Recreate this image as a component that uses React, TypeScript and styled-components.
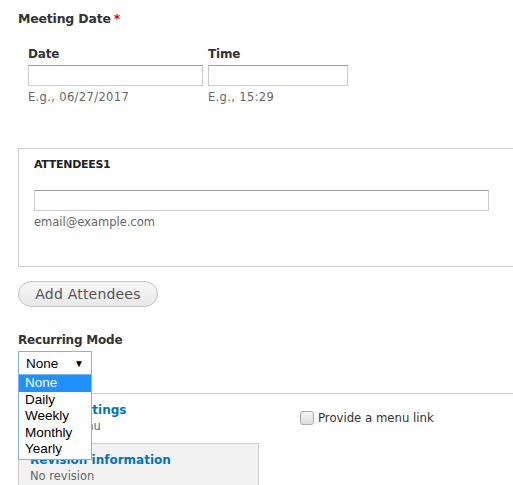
import { createGlobalStyle } from "styled-components";
import styled from "styled-components";

const Global = createGlobalStyle`
  html, body { margin: 0; padding: 0; background: #fff; }
  body {
    font-family: "DejaVu Sans", "Lucida Grande", sans-serif;
    color: #333;
    overflow: hidden;
  }
`;

const Page = styled.div`
  padding: 10px 0 0 18px;
  width: 560px;
`;

const Label = styled.div<{ small?: boolean }>`
  font-weight: bold;
  font-size: ${(p) => (p.small ? "12px" : "12.5px")};
  line-height: 18px;
  color: #333;
  letter-spacing: -0.2px;
`;

const Required = styled.span`
  color: #e00;
  margin-left: 3px;
`;

const DateRow = styled.div`
  display: flex;
  gap: 5px;
  margin: 17px 0 0 10px;
`;

const Field = styled.div`
  display: flex;
  flex-direction: column;
`;

const TextInput = styled.div<{ w: number; gap?: number }>`
  width: ${(p) => p.w}px;
  height: 21px;
  box-sizing: border-box;
  border: 1px solid #ccc;
  border-top-color: #999;
  margin-top: ${(p) => p.gap ?? 2}px;
`;

const Desc = styled.div<{ wide?: boolean }>`
  font-size: 11.5px;
  letter-spacing: ${(p) => (p.wide ? "0.35px" : "0")};
  color: #666;
  line-height: 16px;
  margin-top: 3px;
`;

const Fieldset = styled.div`
  margin-top: 43px;
  border: 1px solid #ccc;
  border-right: none;
  height: 119px;
  box-sizing: border-box;
  padding: 8px 0 0 15px;
`;

const Caps = styled.div`
  font-weight: bold;
  font-size: 11px;
  line-height: 16px;
  letter-spacing: -0.3px;
  text-transform: uppercase;
  color: #222;
`;

const Button = styled.div`
  margin-top: 14px;
  width: 140px;
  height: 26px;
  box-sizing: border-box;
  border: 1px solid #c4c4c4;
  border-radius: 13px;
  background: linear-gradient(#f6f6f6, #e8e8e8);
  color: #555;
  font-size: 14px;
  letter-spacing: 0.2px;
  display: flex;
  align-items: center;
  justify-content: center;
`;

const RecurringBlock = styled.div`
  margin-top: 24px;
  position: relative;
`;

const Select = styled.div`
  margin-top: 2px;
  width: 74px;
  height: 23px;
  box-sizing: border-box;
  border: 1px solid #7eb4ea;
  border-bottom: none;
  display: flex;
  align-items: center;
  justify-content: space-between;
  padding: 0 7px 0 7px;
  font-family: "Liberation Sans", Arial, sans-serif;
  font-size: 13.5px;
  color: #000;
`;

const Arrow = styled.span`
  font-size: 10px;
`;

const ListBox = styled.div`
  position: absolute;
  left: 0;
  top: 43px;
  width: 74px;
  box-sizing: border-box;
  border: 1px solid #7eb4ea;
  background: #fff;
  z-index: 2;
  font-family: "Liberation Sans", Arial, sans-serif;
  font-size: 13.5px;
  padding-bottom: 1px;
`;

const Option = styled.div<{ active?: boolean }>`
  height: 16.5px;
  line-height: 16.5px;
  padding-left: 6px;
  background: ${(p) => (p.active ? "#1e90ff" : "transparent")};
  color: ${(p) => (p.active ? "#fff" : "#000")};
`;

const VerticalTabs = styled.div`
  margin-top: 19px;
  border-top: 1px solid #ccc;
  border-left: 1px solid #ccc;
  display: flex;
  height: 100px;
`;

const TabList = styled.div`
  width: 240px;
  display: flex;
  flex-direction: column;
`;

const Tab = styled.div<{ selected?: boolean }>`
  box-sizing: border-box;
  height: ${(p) => (p.selected ? "49px" : "auto")};
  flex: ${(p) => (p.selected ? "none" : "1")};
  padding: 8px 0 0 11px;
  background: ${(p) => (p.selected ? "#fff" : "#f2f2f2")};
  border-top: ${(p) => (p.selected ? "none" : "1px solid #ccc")};
  border-right: ${(p) => (p.selected ? "none" : "1px solid #ccc")};
`;

const TabTitle = styled.div`
  color: #0074bd;
  font-weight: bold;
  font-size: 12px;
  line-height: 16px;
`;

const TabSummary = styled.div`
  color: #666;
  font-size: 11.5px;
  line-height: 16px;
`;

const Pane = styled.div`
  flex: 1;
  padding: 17px 0 0 41px;
`;

const CheckRow = styled.div`
  display: flex;
  align-items: center;
  gap: 4px;
  font-size: 11.7px;
  color: #333;
`;

const Checkbox = styled.span`
  width: 12px;
  height: 12px;
  border: 1px solid #aaa;
  border-radius: 3px;
  background: linear-gradient(#f4f4f4, #dcdcdc);
`;

export default function App() {
  return (
    <Page>
      <Global />
      <Label>
        Meeting Date<Required>*</Required>
      </Label>
      <DateRow>
        <Field>
          <Label small>Date</Label>
          <TextInput w={175} />
          <Desc wide>E.g., 06/27/2017</Desc>
        </Field>
        <Field>
          <Label small>Time</Label>
          <TextInput w={140} />
          <Desc wide>E.g., 15:29</Desc>
        </Field>
      </DateRow>
      <Fieldset>
        <Caps>Attendees1</Caps>
        <TextInput w={455} gap={17} />
        <Desc>email@example.com</Desc>
      </Fieldset>
      <Button>Add Attendees</Button>
      <RecurringBlock>
        <Label small>Recurring Mode</Label>
        <Select>
          None <Arrow>▼</Arrow>
        </Select>
        <ListBox>
          <Option active>None</Option>
          <Option>Daily</Option>
          <Option>Weekly</Option>
          <Option>Monthly</Option>
          <Option>Yearly</Option>
        </ListBox>
        <VerticalTabs>
          <TabList>
            <Tab selected>
              <TabTitle>Menu settings</TabTitle>
              <TabSummary>Not in menu</TabSummary>
            </Tab>
            <Tab>
              <TabTitle>Revision information</TabTitle>
              <TabSummary>No revision</TabSummary>
            </Tab>
          </TabList>
          <Pane>
            <CheckRow>
              <Checkbox />
              Provide a menu link
            </CheckRow>
          </Pane>
        </VerticalTabs>
      </RecurringBlock>
    </Page>
  );
}
